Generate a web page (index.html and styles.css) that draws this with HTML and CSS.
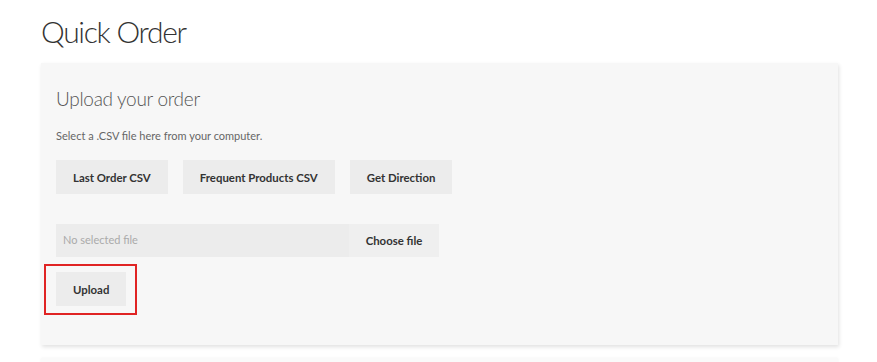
FILE: index.html
```html
<!DOCTYPE html>
<html lang="en">
    <head>
        <meta charset="UTF-8">
        <meta name="viewport" content="width=device-width, initial-scale=1.0">
        <title>Quick Order</title>
        <link rel="stylesheet" href="styles.css">
    </head>
    <body>
        <div class="page">
            <h1 class="title">Quick Order</h1>

            <div class="panel">
                <h2 class="panel-title">Upload your order</h2>
                <p class="hint">Select a .CSV file here from your computer.</p>

                <div class="actions">
                    <button class="btn">Last Order CSV</button>
                    <button class="btn">Frequent Products CSV</button>
                    <button class="btn">Get Direction</button>
                </div>

                <div class="file-field">
                    <span class="file-name">No selected file</span>
                    <label class="file-btn">Choose file</label>
                </div>

                <div class="upload-wrap">
                    <button class="btn">Upload</button>
                </div>
            </div>

            <div class="panel-next"></div>
        </div>
    </body>
</html>
```

FILE: styles.css
```css
* {
    margin: 0;
    padding: 0;
    box-sizing: border-box;
    font-family: Lato, "Open Sans", sans-serif;
}

body {
    background-color: white;
}

.page {
    padding: 12px 39px 0 41px;
}

.title {
    font-size: 30px;
    font-weight: 300;
    letter-spacing: -1.3px;
    color: #333;
    line-height: 38px;
    margin-bottom: 13px;
}

.panel {
    background-color: #f7f7f7;
    box-shadow: 1px 2px 4px rgba(0,0,0,0.12);
    padding: 24px 15px 30px 15px;
}

.panel-title {
    font-size: 19px;
    font-weight: 300;
    letter-spacing: -0.3px;
    color: #555;
    line-height: 24px;
    margin-bottom: 18px;
}

.hint {
    font-size: 11px;
    color: #666;
    margin-bottom: 18px;
}

.actions {
    display: flex;
    gap: 15px;
    margin-bottom: 30px;
}

.btn {
    background-color: #ececec;
    border: none;
    height: 34px;
    padding: 0 17px;
    font-size: 11.4px;
    font-weight: bold;
    color: #333;
    cursor: pointer;
}

.file-field {
    display: flex;
    width: 383px;
    height: 33px;
    background-color: #ececec;
    margin-bottom: 7px;
}

.file-name {
    flex: 1;
    font-size: 11px;
    color: #aaa;
    padding: 9px 7px;
}

.file-btn {
    width: 90px;
    background-color: #efefef;
    font-size: 11.4px;
    font-weight: bold;
    color: #333;
    display: flex;
    align-items: center;
    justify-content: center;
}

.upload-wrap {
    display: inline-block;
    border: 2px solid #e02424;
    margin-left: -12px;
    padding: 6px 9px 7px 10px;
}

.panel-next {
    height: 10px;
    margin-top: 13px;
    background-color: #fafafa;
    box-shadow: 0 0 3px rgba(0,0,0,0.05);
}
```
